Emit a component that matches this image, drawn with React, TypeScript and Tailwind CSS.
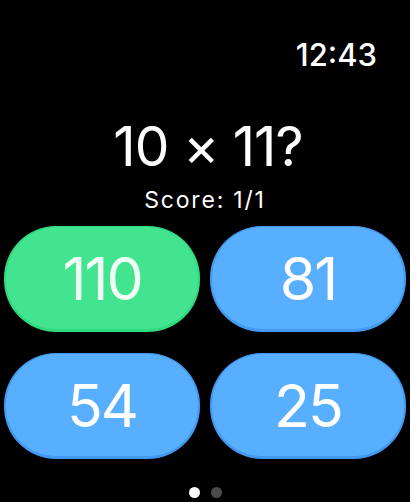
import React from 'react'

type Answer = {
  value: number
  correct?: boolean
}

const answers: Answer[] = [
  { value: 110, correct: true },
  { value: 81 },
  { value: 54 },
  { value: 25 },
]

const AnswerButton = ({ answer }: { answer: Answer }) => {
  return (
    <button
      className={
        answer.correct
          ? 'flex h-[106px] items-center justify-center rounded-[52px] border-x-2 border-t border-b-[3px] border-[#30d880] bg-[#43e48f] text-[#effff5]'
          : 'flex h-[106px] items-center justify-center rounded-[52px] border-x-2 border-t border-b-[3px] border-[#4199f0] bg-[#58afff] text-white'
      }
    >
      <span className="text-[59px] leading-none tracking-[-2px]">{answer.value}</span>
    </button>
  )
}

export default function App() {
  return (
    <div
      className="flex h-[502px] w-[410px] flex-col bg-black text-white"
      style={{ fontFamily: 'Inter, "Liberation Sans", sans-serif' }}
    >
      <div className="mt-[39px] h-[31px] pr-[33px] text-right text-[31px] font-medium leading-none">12:43</div>

      <div className="mt-[49px] h-[55px] pl-[6px] text-center text-[55px] leading-none tracking-[-1px]">10 × 11?</div>
      <div className="mt-[15px] h-[23px] text-center text-[23px] leading-none tracking-[1.8px]">Score: 1/1</div>

      <div className="mt-[14px] grid grid-cols-2 gap-x-[10px] gap-y-[21px] px-[4px]">
        {answers.map((a) => (
          <AnswerButton key={a.value} answer={a} />
        ))}
      </div>

      <div className="mt-[28px] flex justify-center gap-[11px]">
        <span className="h-[11px] w-[11px] rounded-full bg-white" />
        <span className="h-[11px] w-[11px] rounded-full bg-[#4a4a4a]" />
      </div>
    </div>
  )
}
